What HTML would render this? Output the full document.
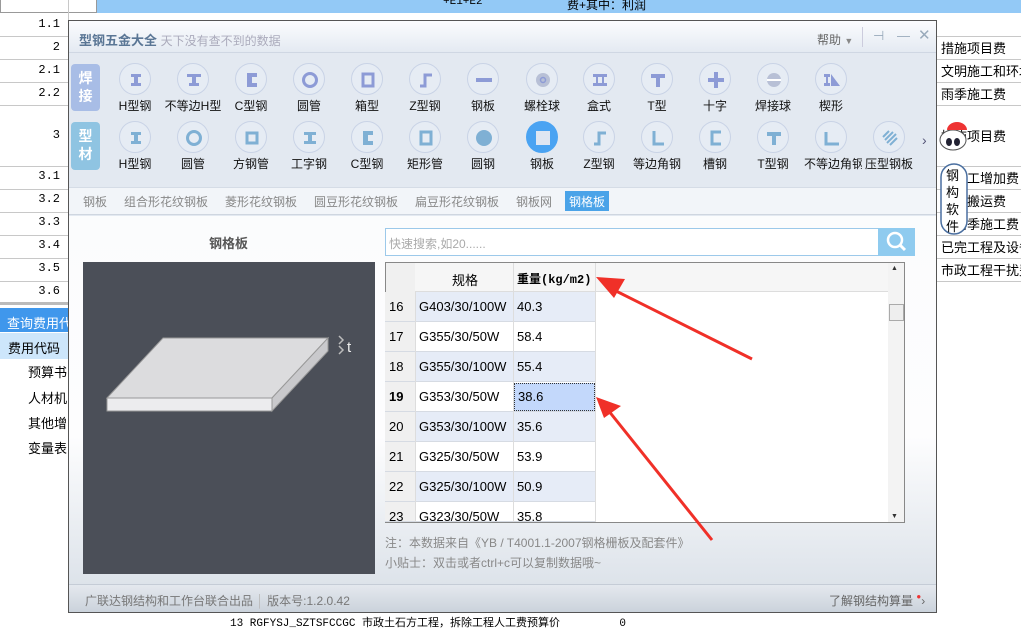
<!DOCTYPE html>
<html><head><meta charset="utf-8"><style>
*{margin:0;padding:0;box-sizing:border-box}
body{width:1021px;height:622px;overflow:hidden;position:relative;background:#fff;font-family:"Liberation Sans","Noto Sans CJK SC",sans-serif;font-size:12px;color:#000}
.a{position:absolute;white-space:nowrap}
.num{position:absolute;left:0;width:68px;text-align:right;padding-right:8px;font-family:"Liberation Mono","Noto Sans CJK SC",monospace;font-size:12px}
.hl{position:absolute;height:1px;background:#c8c8c8}
.ic{position:absolute;width:32px;height:32px;border-radius:50%;border:1px solid #c9d3e6;background:#e6ecf4}
.ic svg{position:absolute;left:7px;top:7px}
.lb{position:absolute;width:70px;text-align:center;font-size:12px;color:#111;white-space:nowrap}
.tab{position:absolute;top:193px;font-size:12px;color:#888;white-space:nowrap}
.row{position:absolute;left:385px;width:210px;height:30px;border-bottom:1px solid #d6dbe3}
.row span{position:absolute;top:7px;font-size:13px;white-space:nowrap}
.rt{position:absolute;left:941px;width:80px;overflow:hidden;white-space:nowrap;font-size:13px}
</style></head><body>
<div class="a" style="left:0;top:0;width:1021px;height:13px;background:#93c9f6"></div>
<div class="a" style="left:0;top:0;width:97px;height:13px;background:#fff;border:1px solid #999;border-top:none"></div>
<div class="a" style="left:443px;top:-4px;font-size:11px;font-family:'Liberation Mono',monospace">+E1+E2</div>
<div class="a" style="left:567px;top:-4px;font-size:12px">费+其中：利润</div>
<div class="a" style="left:68px;top:0;width:1px;height:305px;background:#c8c8c8"></div>
<div class="num" style="top:17px">1.1</div>
<div class="num" style="top:40px">2</div>
<div class="num" style="top:63px">2.1</div>
<div class="num" style="top:86px">2.2</div>
<div class="num" style="top:128px">3</div>
<div class="num" style="top:169px">3.1</div>
<div class="num" style="top:192px">3.2</div>
<div class="num" style="top:215px">3.3</div>
<div class="num" style="top:238px">3.4</div>
<div class="num" style="top:261px">3.5</div>
<div class="num" style="top:284px">3.6</div>
<div class="hl" style="left:0;top:36px;width:68px"></div><div class="hl" style="left:0;top:59px;width:68px"></div>
<div class="hl" style="left:0;top:82px;width:68px"></div><div class="hl" style="left:0;top:105px;width:68px"></div>
<div class="hl" style="left:0;top:166px;width:68px"></div><div class="hl" style="left:0;top:189px;width:68px"></div>
<div class="hl" style="left:0;top:212px;width:68px"></div><div class="hl" style="left:0;top:235px;width:68px"></div>
<div class="hl" style="left:0;top:258px;width:68px"></div><div class="hl" style="left:0;top:281px;width:68px"></div>
<div class="a" style="left:0;top:302px;width:68px;height:3px;background:#bbb"></div>
<div class="a" style="left:0;top:308px;width:68px;height:24px;background:#3f97ec;color:#fff;font-size:13px;padding:5px 0 0 7px;overflow:hidden">查询费用代</div>
<div class="a" style="left:0;top:333px;width:68px;height:26px;background:#cde6fb;font-size:13px;padding:5px 0 0 8px">费用代码</div>
<div class="a" style="left:28px;top:362px;font-size:13px">预算书</div>
<div class="a" style="left:28px;top:388px;font-size:13px">人材机</div>
<div class="a" style="left:28px;top:413px;font-size:13px">其他增</div>
<div class="a" style="left:28px;top:438px;font-size:13px">变量表</div>
<div class="a" style="left:937px;top:13px;width:84px;height:300px;background:#fff"></div>
<div class="rt" style="top:38px">措施项目费</div>
<div class="rt" style="top:61px">文明施工和环境</div>
<div class="rt" style="top:84px">雨季施工费</div>
<div class="rt" style="top:126px">措施项目费</div>
<div class="rt" style="top:168px">冬施工增加费</div>
<div class="rt" style="top:191px">二次搬运费</div>
<div class="rt" style="top:214px">冬雨季施工费</div>
<div class="rt" style="top:237px">已完工程及设备</div>
<div class="rt" style="top:260px">市政工程干扰费</div>
<div class="hl" style="left:937px;top:36px;width:84px"></div><div class="hl" style="left:937px;top:59px;width:84px"></div>
<div class="hl" style="left:937px;top:82px;width:84px"></div><div class="hl" style="left:937px;top:105px;width:84px"></div>
<div class="hl" style="left:937px;top:166px;width:84px"></div><div class="hl" style="left:937px;top:189px;width:84px"></div>
<div class="hl" style="left:937px;top:212px;width:84px"></div><div class="hl" style="left:937px;top:235px;width:84px"></div>
<div class="hl" style="left:937px;top:258px;width:84px"></div><div class="hl" style="left:937px;top:281px;width:84px"></div>
<div class="a" style="left:230px;top:614px;font-size:11px;font-family:'Liberation Mono','Noto Sans CJK SC',monospace">13 RGFYSJ_SZTSFCCGC 市政土石方工程，拆除工程人工费预算价&nbsp;&nbsp;&nbsp;&nbsp;&nbsp;&nbsp;&nbsp;&nbsp;&nbsp;0</div>

<div class="a" style="left:68px;top:20px;width:869px;height:593px;border:1px solid #555;background:#e3e9f1;overflow:hidden">
 <div class="a" style="left:0;top:0;width:869px;height:32px;background:linear-gradient(#fbfcfe,#e4eaf2);border-bottom:1px solid #cfd7e3"></div>
 <div class="a" style="left:10px;top:9px;font-size:13px;font-weight:bold;color:#5a7695">型钢五金大全 <span style="font-weight:normal;color:#aab;font-size:12px">天下没有查不到的数据</span></div>
 <div class="a" style="left:748px;top:10px;color:#666">帮助 <span style="font-size:9px;color:#888">▼</span></div>
 <div class="a" style="left:793px;top:6px;width:1px;height:20px;background:#ccd"></div>
 <div class="a" style="left:804px;top:7px;color:#9ab;font-size:13px">⊣</div>
 <div class="a" style="left:828px;top:7px;color:#9ab;font-size:13px">—</div>
 <div class="a" style="left:849px;top:5px;color:#9ab;font-size:15px">✕</div>
 <div class="a" style="left:2px;top:43px;width:29px;height:47px;background:#a8bde6;border-radius:4px;color:#fff;font-weight:bold;font-size:14px;text-align:center;line-height:18px;padding-top:5px">焊<br>接</div>
 <div class="a" style="left:2px;top:101px;width:29px;height:48px;background:#8fc4e2;border-radius:4px;color:#fff;font-weight:bold;font-size:14px;text-align:center;line-height:18px;padding-top:5px">型<br>材</div>
 <div class="a" style="left:853px;top:111px;color:#557;font-size:14px">›</div>
 <div class="a" style="left:0;top:166px;width:869px;height:28px;background:#f2f5f9;border-top:1px solid #d5dce6;border-bottom:1px solid #cfd6e0"></div>
 <div class="a" style="left:0;top:195px;width:869px;height:368px;background:linear-gradient(#fbfcfd,#fdfdfe 60%,#dde3ea)"></div>
 <div class="a" style="left:0;top:563px;width:869px;height:30px;background:linear-gradient(#e4e8ee,#c9d1da);border-top:1px solid #c5ccd6"></div>
 <div class="a" style="left:16px;top:571px;color:#777;font-size:12px">广联达钢结构和工作台联合出品 <span style="color:#bbb">│</span> 版本号:1.2.0.42</div>
 <div class="a" style="left:760px;top:571px;color:#666;font-size:12px">了解钢结构算量 <span style="color:#e33;font-size:8px;vertical-align:top">●</span><span style="color:#666">›</span></div>
</div>

<div class="ic" style="left:119px;top:63px"><svg width="18" height="18"><path d="M4 3h10v3h-3v6h3v3H4v-3h3V6H4z" fill="#8d9bd6"/></svg></div>
<div class="ic" style="left:177px;top:63px"><svg width="18" height="18"><path d="M2 3h14v3h-5v6h3v3H4v-3h3V6H2z" fill="#8d9bd6"/></svg></div>
<div class="ic" style="left:235px;top:63px"><svg width="18" height="18"><path d="M4 2h10v4h-5v6h5v4H4z" fill="#8d9bd6"/></svg></div>
<div class="ic" style="left:293px;top:63px"><svg width="18" height="18"><circle cx="9" cy="9" r="6.5" fill="none" stroke="#8d9bd6" stroke-width="3"/></svg></div>
<div class="ic" style="left:351px;top:63px"><svg width="18" height="18"><rect x="4" y="3" width="10" height="12" fill="none" stroke="#8d9bd6" stroke-width="3"/></svg></div>
<div class="ic" style="left:409px;top:63px"><svg width="18" height="18"><path d="M3 15h5V4h7" fill="none" stroke="#8d9bd6" stroke-width="3"/></svg></div>
<div class="ic" style="left:467px;top:63px"><svg width="18" height="18"><rect x="1" y="7" width="16" height="4" fill="#8d9bd6"/></svg></div>
<div class="ic" style="left:526px;top:63px"><svg width="18" height="18"><circle cx="9" cy="9" r="7" fill="#b8c0d6"/><circle cx="9" cy="9" r="2.5" fill="none" stroke="#8d9bd6" stroke-width="1.5"/></svg></div>
<div class="ic" style="left:583px;top:63px"><svg width="18" height="18"><path d="M2 3h14v3H2zM2 12h14v3H2zM5 6h2v6H5zM11 6h2v6h-2z" fill="#8d9bd6"/></svg></div>
<div class="ic" style="left:641px;top:63px"><svg width="18" height="18"><path d="M2 3h14v4h-5v9H7V7H2z" fill="#8d9bd6"/></svg></div>
<div class="ic" style="left:699px;top:63px"><svg width="18" height="18"><path d="M7 1h4v16H7zM1 7h16v4H1z" fill="#8d9bd6"/></svg></div>
<div class="ic" style="left:757px;top:63px"><svg width="18" height="18"><circle cx="9" cy="9" r="7" fill="#b8c0d6"/><rect x="2" y="8" width="14" height="2" fill="#fff"/></svg></div>
<div class="ic" style="left:815px;top:63px"><svg width="18" height="18"><path d="M1 3h6v3H5v6h2v3H1v-3h2V6H1zM8 15V3l9 12z" fill="#8d9bd6"/></svg></div>
<div class="lb" style="left:100px;top:97px">H型钢</div><div class="lb" style="left:158px;top:97px">不等边H型</div>
<div class="lb" style="left:216px;top:97px">C型钢</div><div class="lb" style="left:274px;top:97px">圆管</div>
<div class="lb" style="left:332px;top:97px">箱型</div><div class="lb" style="left:390px;top:97px">Z型钢</div>
<div class="lb" style="left:448px;top:97px">钢板</div><div class="lb" style="left:507px;top:97px">螺栓球</div>
<div class="lb" style="left:564px;top:97px">盒式</div><div class="lb" style="left:622px;top:97px">T型</div>
<div class="lb" style="left:680px;top:97px">十字</div><div class="lb" style="left:738px;top:97px">焊接球</div>
<div class="lb" style="left:796px;top:97px">楔形</div>
<div class="ic" style="left:119px;top:121px"><svg width="18" height="18"><path d="M4 3h10v3h-3v6h3v3H4v-3h3V6H4z" fill="#7fb0d4"/></svg></div>
<div class="ic" style="left:177px;top:121px"><svg width="18" height="18"><circle cx="9" cy="9" r="6.5" fill="none" stroke="#7fb0d4" stroke-width="3"/></svg></div>
<div class="ic" style="left:235px;top:121px"><svg width="18" height="18"><rect x="4" y="4" width="10" height="10" fill="none" stroke="#7fb0d4" stroke-width="3"/></svg></div>
<div class="ic" style="left:293px;top:121px"><svg width="18" height="18"><path d="M3 3h12v3h-4v6h4v3H3v-3h4V6H3z" fill="#7fb0d4"/></svg></div>
<div class="ic" style="left:351px;top:121px"><svg width="18" height="18"><path d="M4 2h10v4h-5v6h5v4H4z" fill="#7fb0d4"/></svg></div>
<div class="ic" style="left:409px;top:121px"><svg width="18" height="18"><rect x="4" y="3" width="10" height="12" fill="none" stroke="#7fb0d4" stroke-width="3"/></svg></div>
<div class="ic" style="left:467px;top:121px"><svg width="18" height="18"><circle cx="9" cy="9" r="8" fill="#7fb0d4"/></svg></div>
<div class="ic" style="left:526px;top:121px;background:#4aa3f2;border-color:#4aa3f2"><svg width="18" height="18"><rect x="2" y="2" width="14" height="14" fill="#dfe6f2"/></svg></div>
<div class="ic" style="left:583px;top:121px"><svg width="18" height="18"><path d="M3 15h5V4h7" fill="none" stroke="#7fb0d4" stroke-width="3"/></svg></div>
<div class="ic" style="left:641px;top:121px"><svg width="18" height="18"><path d="M5 2v13h10" fill="none" stroke="#7fb0d4" stroke-width="3"/></svg></div>
<div class="ic" style="left:699px;top:121px"><svg width="18" height="18"><path d="M14 3H5v12h9" fill="none" stroke="#7fb0d4" stroke-width="3"/></svg></div>
<div class="ic" style="left:757px;top:121px"><svg width="18" height="18"><path d="M2 3h14v4h-5v9H7V7H2z" fill="#7fb0d4"/></svg></div>
<div class="ic" style="left:815px;top:121px"><svg width="18" height="18"><path d="M3 3v12h13" fill="none" stroke="#7fb0d4" stroke-width="3"/></svg></div>
<div class="ic" style="left:873px;top:121px"><svg width="18" height="18"><path d="M2 8l6-6M4 11l8-8M6 14l9-9M9 16l7-7" stroke="#7fb0d4" stroke-width="2"/></svg></div>
<div class="lb" style="left:100px;top:155px">H型钢</div><div class="lb" style="left:158px;top:155px">圆管</div>
<div class="lb" style="left:216px;top:155px">方钢管</div><div class="lb" style="left:274px;top:155px">工字钢</div>
<div class="lb" style="left:332px;top:155px">C型钢</div><div class="lb" style="left:390px;top:155px">矩形管</div>
<div class="lb" style="left:448px;top:155px">圆钢</div><div class="lb" style="left:507px;top:155px">钢板</div>
<div class="lb" style="left:564px;top:155px">Z型钢</div><div class="lb" style="left:622px;top:155px">等边角钢</div>
<div class="lb" style="left:680px;top:155px">槽钢</div><div class="lb" style="left:738px;top:155px">T型钢</div>
<div class="lb" style="left:804px;top:155px;overflow:hidden;width:58px">不等边角钢</div><div class="lb" style="left:854px;top:155px">压型钢板</div>

<div class="tab" style="left:83px">钢板</div>
<div class="tab" style="left:124px">组合形花纹钢板</div>
<div class="tab" style="left:225px">菱形花纹钢板</div>
<div class="tab" style="left:314px">圆豆形花纹钢板</div>
<div class="tab" style="left:415px">扁豆形花纹钢板</div>
<div class="tab" style="left:516px">钢板网</div>
<div class="a" style="left:565px;top:191px;width:44px;height:20px;background:#4aa3e8;color:#fff;text-align:center;padding-top:2px">钢格板</div>

<div class="a" style="left:209px;top:233px;font-weight:bold;color:#555;font-size:13px">钢格板</div>
<div class="a" style="left:83px;top:262px;width:292px;height:312px;background:#4b4f58">
 <svg width="292" height="312" style="position:absolute;left:0;top:0">
  <polygon points="24,136 80,76 245,76 189,136" fill="#dcdcde" stroke="#999"/>
  <polygon points="24,136 189,136 189,149 24,149" fill="#ececee" stroke="#999"/>
  <polygon points="189,136 245,76 245,89 189,149" fill="#c9c9cc" stroke="#999"/>
  <path d="M256 74l4 4-4 4M256 84l4 4-4 4" stroke="#bbb" stroke-width="1.5" fill="none"/>
  <text x="264" y="90" fill="#eee" font-size="15" font-family="Liberation Sans">t</text>
 </svg>
</div>
<div class="a" style="left:385px;top:228px;width:494px;height:28px;border:1px solid #9cc9ea;background:#fff;color:#aaa;padding:6px 0 0 3px;font-size:12px">快速搜索,如20......</div>
<div class="a" style="left:878px;top:228px;width:37px;height:28px;background:#8fcbef"><svg width="37" height="28"><circle cx="17" cy="12" r="7" fill="none" stroke="#fff" stroke-width="2.5"/><path d="M22 17l5 5" stroke="#fff" stroke-width="3"/></svg></div>
<div class="a" style="left:385px;top:262px;width:520px;height:261px;border:1px solid #888;background:#fff;overflow:hidden">
 <div class="a" style="left:0;top:0;width:502px;height:29px;background:#f6f6f6;border-bottom:1px solid #ddd"></div>
 <div class="a" style="left:0;top:0;width:29px;height:260px;background:#f0f0f0"></div>
 <div class="a" style="left:66px;top:7px;font-size:13px">规格</div>
 <div class="a" style="left:127px;top:0;width:1px;height:260px;background:#ddd"></div>
 <div class="a" style="left:131px;top:7px;font-size:12px;font-weight:bold;font-family:'Liberation Mono','Noto Sans CJK SC',monospace">重量(kg/m2)</div>
 <div class="a" style="left:209px;top:0;width:1px;height:260px;background:#ddd"></div>
 <div class="a" style="left:502px;top:0;width:17px;height:260px;background:#f3f3f3"></div>
 <div class="a" style="left:505px;top:2px;font-size:7px;color:#333">▲</div>
 <div class="a" style="left:505px;top:250px;font-size:7px;color:#333">▼</div>
 <div class="a" style="left:503px;top:41px;width:15px;height:17px;border:1px solid #aaa;background:#eee"></div>
</div>
<div class="row" style="top:292px;background:linear-gradient(90deg,#f0f0f0 30px,#e6ecf7 30px)"><span style="left:4px">16</span><span style="left:34px">G403/30/100W</span><span style="left:132px">40.3</span></div>
<div class="row" style="top:322px;background:linear-gradient(90deg,#f0f0f0 30px,#fff 30px)"><span style="left:4px">17</span><span style="left:34px">G355/30/50W</span><span style="left:132px">58.4</span></div>
<div class="row" style="top:352px;background:linear-gradient(90deg,#f0f0f0 30px,#e6ecf7 30px)"><span style="left:4px">18</span><span style="left:34px">G355/30/100W</span><span style="left:132px">55.4</span></div>
<div class="row" style="top:382px;background:linear-gradient(90deg,#f0f0f0 30px,#fff 30px)"><span style="left:4px;font-weight:bold">19</span><span style="left:34px">G353/30/50W</span></div>
<div class="a" style="left:514px;top:383px;width:81px;height:28px;background:#c3d8fb;border:1px dotted #333;padding:5px 0 0 3px;font-size:13px">38.6</div>
<div class="row" style="top:412px;background:linear-gradient(90deg,#f0f0f0 30px,#e6ecf7 30px)"><span style="left:4px">20</span><span style="left:34px">G353/30/100W</span><span style="left:132px">35.6</span></div>
<div class="row" style="top:442px;background:linear-gradient(90deg,#f0f0f0 30px,#fff 30px)"><span style="left:4px">21</span><span style="left:34px">G325/30/50W</span><span style="left:132px">53.9</span></div>
<div class="row" style="top:472px;background:linear-gradient(90deg,#f0f0f0 30px,#e6ecf7 30px)"><span style="left:4px">22</span><span style="left:34px">G325/30/100W</span><span style="left:132px">50.9</span></div>
<div class="row" style="top:502px;height:20px;overflow:hidden;background:linear-gradient(90deg,#f0f0f0 30px,#fff 30px)"><span style="left:4px">23</span><span style="left:34px">G323/30/50W</span><span style="left:132px">35.8</span></div>
<div class="a" style="left:415px;top:292px;width:1px;height:230px;background:#ddd"></div>
<div class="a" style="left:513px;top:292px;width:1px;height:230px;background:#ddd"></div>
<div class="a" style="left:595px;top:292px;width:1px;height:230px;background:#ddd"></div>
<div class="a" style="left:385px;top:534px;color:#888;font-size:12px">注：本数据来自《YB / T4001.1-2007钢格栅板及配套件》</div>
<div class="a" style="left:385px;top:554px;color:#888;font-size:12px">小贴士：双击或者ctrl+c可以复制数据哦~</div>
<svg class="a" style="left:0;top:0" width="1021" height="622">
 <path d="M752 359L610 288" stroke="#f03028" stroke-width="3"/>
 <polygon points="596,277 625,279 614,298" fill="#f03028"/>
 <path d="M712 540L608 410" stroke="#f03028" stroke-width="3"/>
 <polygon points="596,397 621,406 604,418" fill="#f03028"/>
</svg>
<svg class="a" style="left:937px;top:120px" width="40" height="115">
 <ellipse cx="16" cy="20" rx="13" ry="10" fill="#fff" stroke="#555"/>
 <path d="M10 10a10 8 0 0 1 20 0z" fill="#e33"/>
 <ellipse cx="12" cy="22" rx="3" ry="4" fill="#223"/><ellipse cx="20" cy="22" rx="3" ry="4" fill="#223"/>
 <rect x="4" y="44" width="26" height="70" rx="13" fill="#fff" stroke="#4a6fa0" stroke-width="1.5"/>
 <text x="9" y="60" font-size="13" font-family="Noto Sans CJK SC">钢</text>
 <text x="9" y="77" font-size="13" font-family="Noto Sans CJK SC">构</text>
 <text x="9" y="94" font-size="13" font-family="Noto Sans CJK SC">软</text>
 <text x="9" y="111" font-size="13" font-family="Noto Sans CJK SC">件</text>
</svg>
</body></html>
